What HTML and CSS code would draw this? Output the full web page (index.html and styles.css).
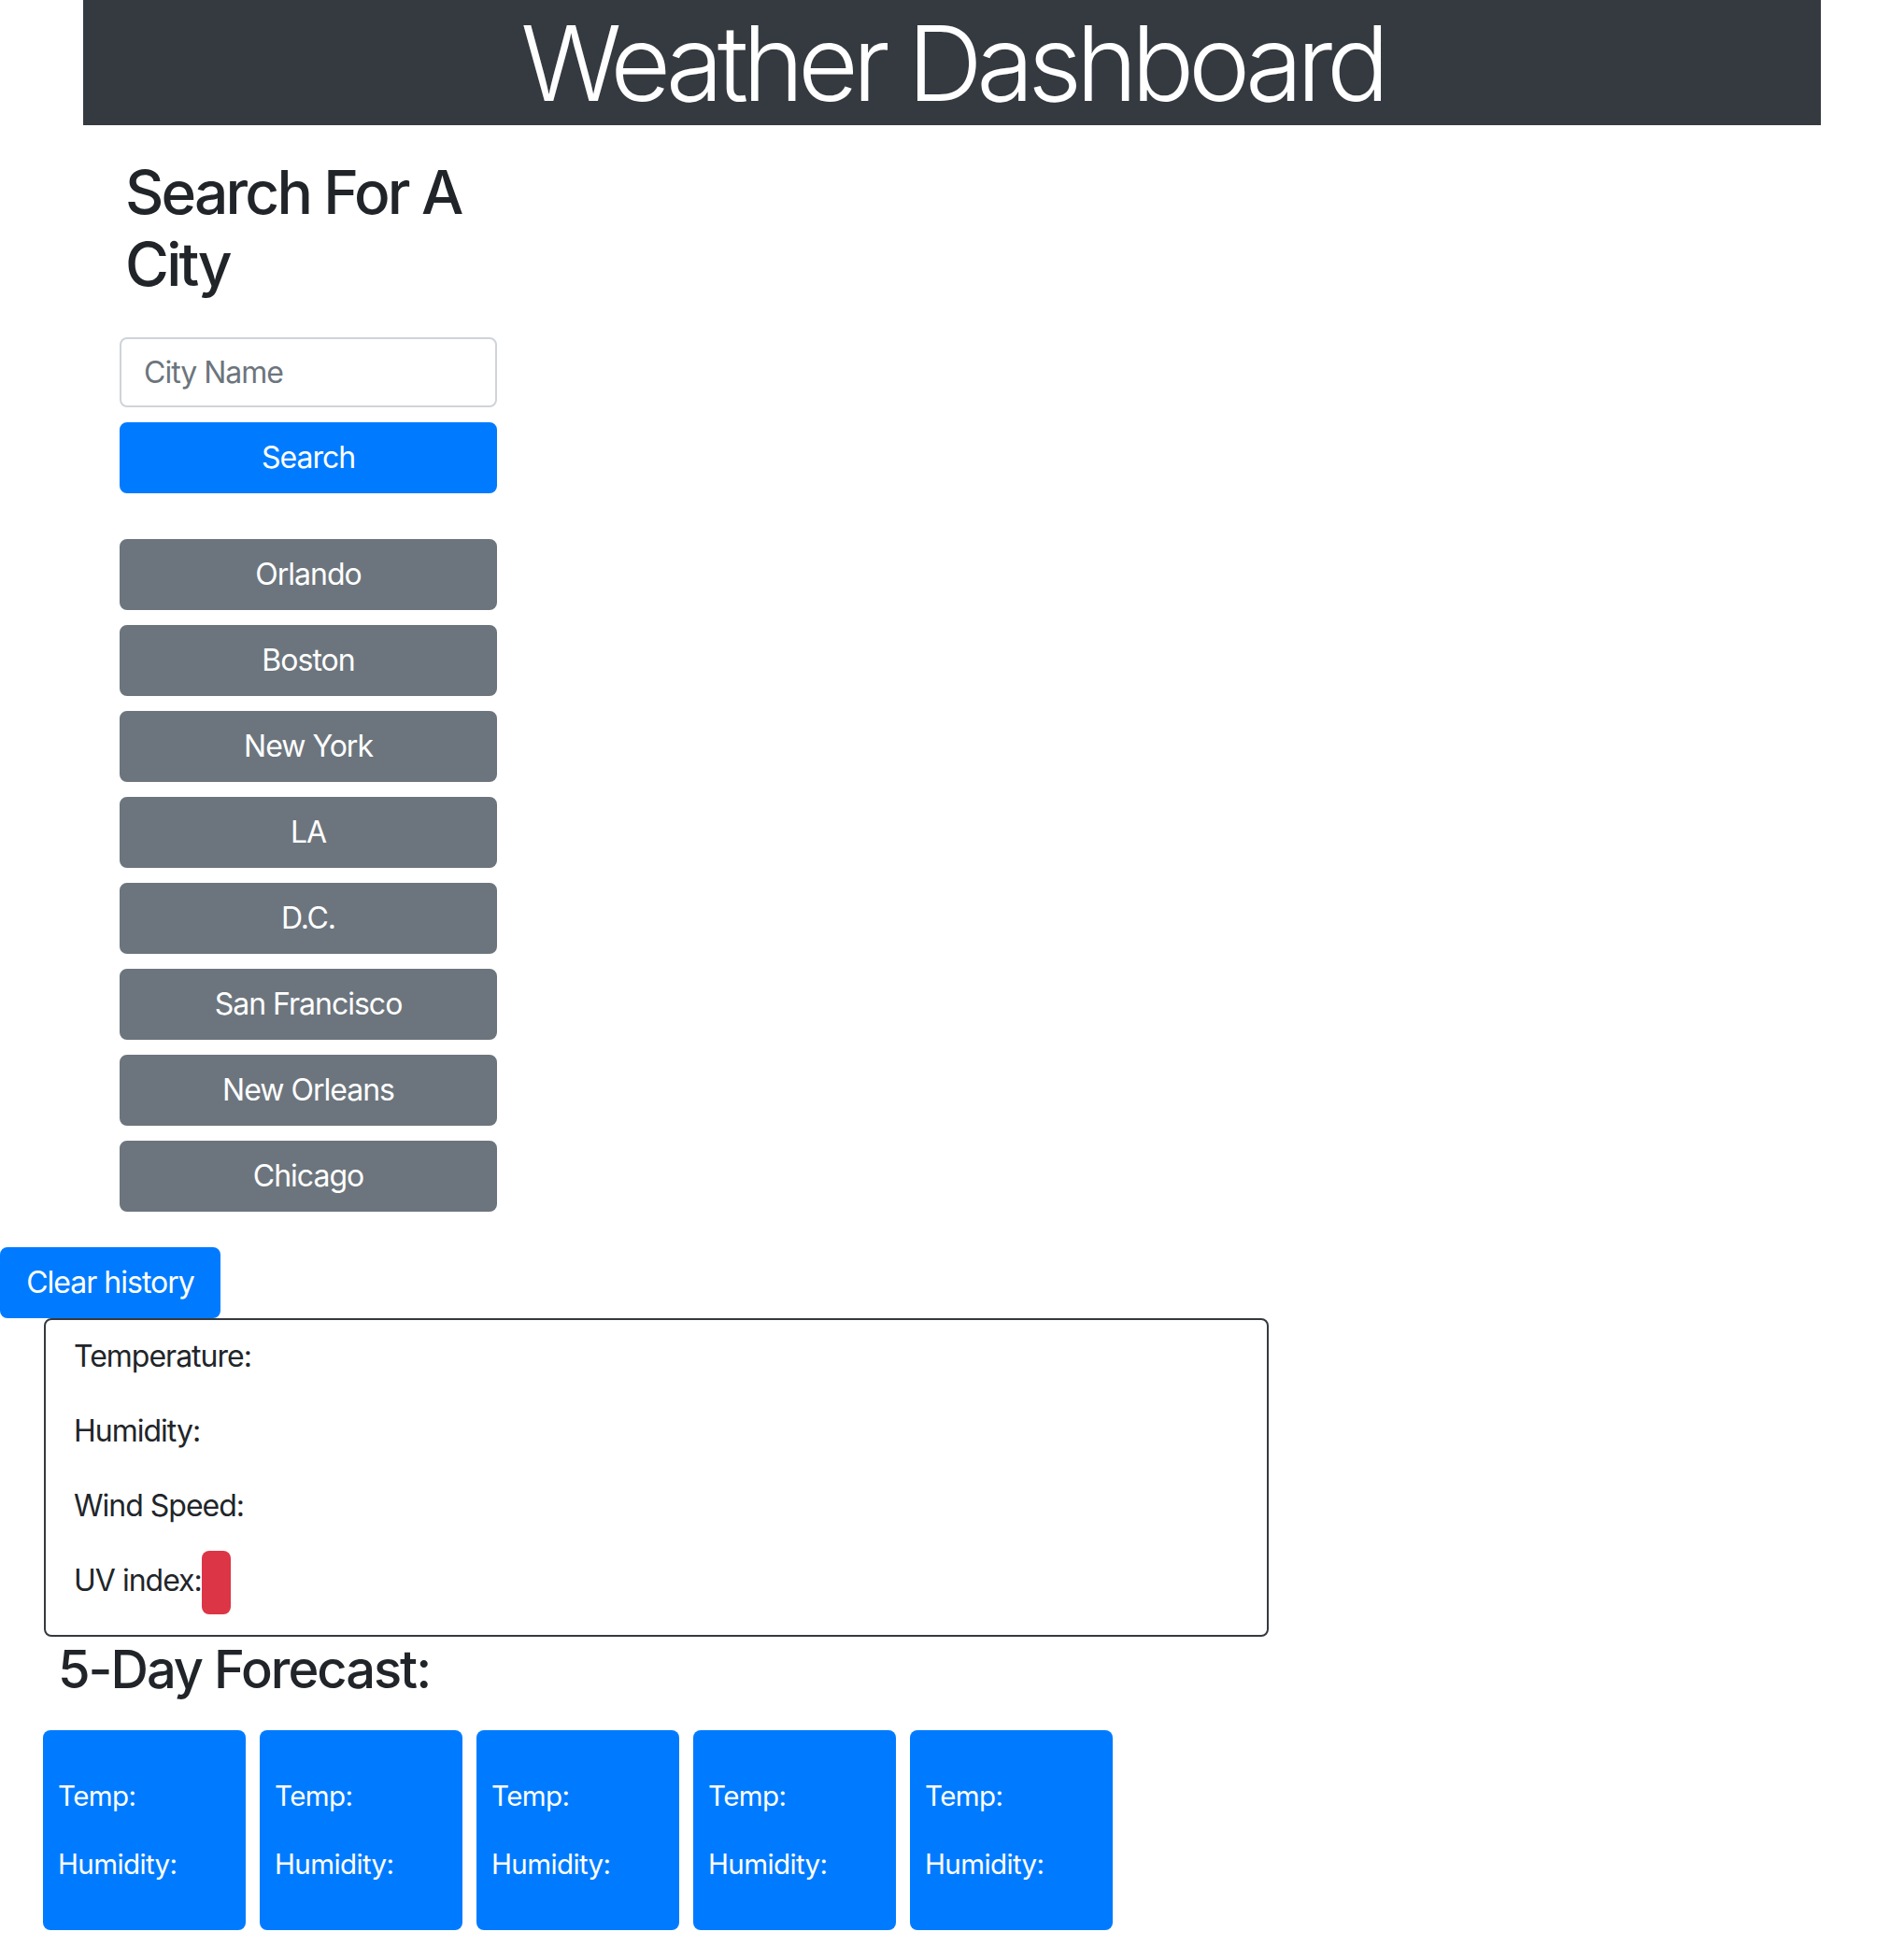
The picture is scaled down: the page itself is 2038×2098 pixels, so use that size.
FILE: index.html
```html
<!DOCTYPE html>
<html lang="en">

<head>
  <meta charset="UTF-8">
  <meta name="viewport" content="width=device-width, initial-scale=1.0">
  <title>Weather Dashboard</title>

  <link rel="stylesheet" href="styles.css">
</head>

<body>

  <header class="jumbo">
    <h1>Weather Dashboard</h1>
  </header>

  <div class="sidebar">
    <h2>Search For A City</h2>

    <input type="text" class="cityInput" placeholder="City Name">
    <button type="button" class="btn btnBlue btnBlock">Search</button>

    <div class="history">
      <button type="button" class="btn btnGray">Orlando</button>
      <button type="button" class="btn btnGray">Boston</button>
      <button type="button" class="btn btnGray">New York</button>
      <button type="button" class="btn btnGray">LA</button>
      <button type="button" class="btn btnGray">D.C.</button>
      <button type="button" class="btn btnGray">San Francisco</button>
      <button type="button" class="btn btnGray">New Orleans</button>
      <button type="button" class="btn btnGray">Chicago</button>
    </div>
  </div>

  <button type="button" class="btn btnBlue clearBtn">Clear history</button>

  <div class="current">
    <p>Temperature:</p>
    <p>Humidity:</p>
    <p>Wind Speed:</p>
    <p>UV index:<span class="uv"></span></p>
  </div>

  <h3 class="forecastTitle">5-Day Forecast:</h3>

  <div class="forecast">
    <div class="day">
      <p>Temp:</p>
      <p>Humidity:</p>
    </div>
    <div class="day">
      <p>Temp:</p>
      <p>Humidity:</p>
    </div>
    <div class="day">
      <p>Temp:</p>
      <p>Humidity:</p>
    </div>
    <div class="day">
      <p>Temp:</p>
      <p>Humidity:</p>
    </div>
    <div class="day">
      <p>Temp:</p>
      <p>Humidity:</p>
    </div>
  </div>

</body>

</html>
```

FILE: styles.css
```css
body {
  margin: 0;
  font-family: Inter, "Liberation Sans", sans-serif;
  letter-spacing: -1px;
  color: #212529;
  background-color: #fff;
}

.jumbo {
  width: 1860px;
  margin: 0 auto;
  background-color: #343a40;
  color: #fff;
  text-align: center;
}

.jumbo h1 {
  margin: 0;
  font-size: 112px;
  font-weight: 300;
  line-height: 134px;
  letter-spacing: -6.5px;
}

.sidebar {
  width: 404px;
  padding-left: 128px;
}

.sidebar h2 {
  margin: 33px 0 40px;
  padding-left: 6px;
  font-size: 64px;
  font-weight: 500;
  line-height: 77px;
  letter-spacing: -2.8px;
}

.cityInput {
  display: block;
  box-sizing: border-box;
  width: 100%;
  height: 75px;
  margin: 0;
  padding: 0 24px;
  border: 2px solid #ced4da;
  border-radius: 8px;
  font-family: inherit;
  font-size: 32px;
  letter-spacing: inherit;
  color: #495057;
}

.cityInput::placeholder {
  color: #6c757d;
}

.btn {
  display: block;
  box-sizing: border-box;
  height: 76px;
  padding: 0 24px;
  border: 2px solid transparent;
  border-radius: 8px;
  font-family: inherit;
  font-size: 32px;
  line-height: 48px;
  letter-spacing: inherit;
  color: #fff;
  text-align: center;
  white-space: nowrap;
}

.btnBlock {
  width: 100%;
}

.btnBlue {
  background-color: #007bff;
  border-color: #007bff;
}

.btnGray {
  background-color: #6c757d;
  border-color: #6c757d;
}

.sidebar .btnBlue {
  margin-top: 16px;
}

.history {
  display: flex;
  flex-direction: column;
  gap: 16px;
  margin-top: 49px;
}

.history .btn {
  width: 100%;
}

.clearBtn {
  margin-top: 38px;
  width: 236px;
  padding: 0;
}

.current {
  width: 1311px;
  box-sizing: border-box;
  margin-left: 47px;
  padding: 15px 30px 0;
  border: 2px solid #343a40;
  border-radius: 8px;
}

.current p {
  margin: 0 0 32px;
  font-size: 32px;
  line-height: 48px;
}

.uv {
  display: inline-block;
  width: 31px;
  height: 68px;
  margin: -10px 0;
  border-radius: 8px;
  background-color: #dc3545;
  vertical-align: middle;
}

.forecastTitle {
  margin: 2px 0 31px 62px;
  font-size: 56px;
  font-weight: 500;
  line-height: 67px;
  letter-spacing: -2px;
}

.forecast {
  display: flex;
  gap: 15px;
  margin-left: 46px;
}

.forecast .day {
  box-sizing: border-box;
  width: 217px;
  height: 214px;
  padding: 48px 16px 0;
  border-radius: 8px;
  background-color: #007bff;
  color: #fff;
}

.day p {
  margin: 0 0 29px;
  font-size: 29.5px;
  line-height: 44px;
  letter-spacing: -0.6px;
}
```
